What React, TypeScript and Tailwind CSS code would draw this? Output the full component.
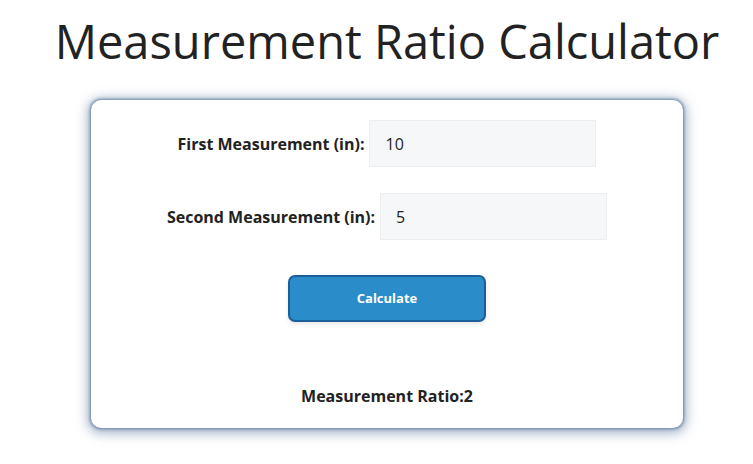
import React, { useState } from "react";

const font = { fontFamily: '"Open Sans", "Noto Sans", Arial, sans-serif' };

export default function App() {
	const [first, setFirst] = useState("10");
	const [second, setSecond] = useState("5");
	const [ratio, setRatio] = useState<string>("2");

	const calculate = () => {
		const a = parseFloat(first);
		const b = parseFloat(second);
		if (!isNaN(a) && !isNaN(b) && b !== 0) setRatio(String(a / b));
	};

	return (
		<div className="min-h-[464px] w-[753px] bg-white pl-[21px] text-[#222]" style={font}>
			<h1 className="pt-[9px] text-center text-[47px] font-normal leading-[64px] text-[#222]">
				Measurement Ratio Calculator
			</h1>

			<div className="mx-auto mt-[27px] flex h-[328px] w-[592px] flex-col items-center rounded-[10px] bg-white pt-[20px] shadow-[0_0_3px_1px_rgba(95,125,162,0.9),0_2px_12px_3px_rgba(80,112,152,0.55)]">
				{/* input rows */}
				<div className="flex items-center gap-[5px]">
					<label className="text-[16px] font-bold">First Measurement (in):</label>
					<input
						value={first}
						onChange={(e) => setFirst(e.target.value)}
						className="h-[47px] w-[227px] border border-[#eceef1] bg-[#f6f7f9] px-[15px] text-[16px] outline-none"
					/>
				</div>
				<div className="mt-[26px] flex items-center gap-[5px]">
					<label className="text-[16px] font-bold">Second Measurement (in):</label>
					<input
						value={second}
						onChange={(e) => setSecond(e.target.value)}
						className="h-[47px] w-[227px] border border-[#eceef1] bg-[#f6f7f9] px-[15px] text-[16px] outline-none"
					/>
				</div>

				<button
					onClick={calculate}
					className="mt-[35px] h-[47px] w-[198px] rounded-[7px] border-2 border-[#1b5f9a] bg-[#2a8dc9] text-[13px] font-bold text-white shadow-[0_2px_4px_rgba(0,0,0,0.1)]"
				>
					Calculate
				</button>

				<p className="mt-[62px] text-[16px] font-bold">Measurement Ratio:{ratio}</p>
			</div>
		</div>
	);
}
